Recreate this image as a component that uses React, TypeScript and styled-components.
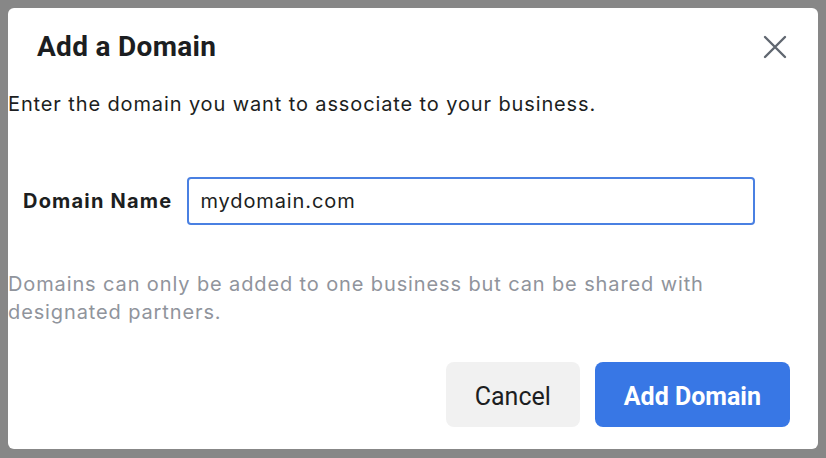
import { useState } from "react";
import styled, { createGlobalStyle } from "styled-components";

const GlobalStyle = createGlobalStyle`
  html {
    background: #878787;
  }
  body {
    margin: 8px;
    font-family: Inter, "Noto Sans", sans-serif;
  }
`;

const Dialog = styled.div`
  width: 810px;
  height: 441px;
  box-sizing: border-box;
  background: #ffffff;
  border-radius: 6px;
  display: flex;
  flex-direction: column;
  padding: 22px 28px 22px 0;
`;

const Header = styled.div`
  display: flex;
  align-items: center;
  justify-content: space-between;
  padding-left: 29px;
  padding-right: 3px;
`;

const Title = styled.h2`
  margin: 0;
  font-family: Roboto, "Liberation Sans", sans-serif;
  font-weight: 700;
  font-size: 28px;
  line-height: 34px;
  letter-spacing: 0.3px;
  color: #1c1e21;
`;

const CloseButton = styled.button`
  width: 24px;
  height: 24px;
  padding: 0;
  border: none;
  background: none;
  cursor: pointer;
  display: flex;
  color: #606770;
`;

const Description = styled.p`
  margin: 28px 0 0;
  font-size: 20px;
  line-height: 24px;
  letter-spacing: 0.88px;
  color: #1c1e21;
`;

const FieldRow = styled.div`
  display: flex;
  align-items: center;
  gap: 15px;
  margin-top: 61px;
  padding-left: 15px;
`;

const Label = styled.label`
  font-weight: 700;
  font-size: 20px;
  letter-spacing: 1.2px;
  color: #1c1e21;
`;

const Input = styled.input`
  width: 568px;
  height: 48px;
  box-sizing: border-box;
  border: 2px solid #4a80e2;
  border-radius: 4px;
  padding: 0 11px;
  font-family: Inter, "Noto Sans", sans-serif;
  font-size: 20px;
  letter-spacing: 0.9px;
  color: #1c1e21;
  outline: none;
  caret-color: #1c1e21;
`;

const Hint = styled.p`
  margin: 45px 0 0;
  max-width: 760px;
  font-size: 20px;
  line-height: 28px;
  letter-spacing: 0.88px;
  color: #90949c;
`;

const Footer = styled.div`
  display: flex;
  justify-content: flex-end;
  gap: 15px;
  margin-top: auto;
`;

const Button = styled.button<{ $primary?: boolean }>`
  height: 65px;
  padding: 3px 29px 0;
  border: none;
  border-radius: 8px;
  font-family: Roboto, "Liberation Sans", sans-serif;
  font-size: 25px;
  font-weight: ${(p) => (p.$primary ? 700 : 400)};
  background: ${(p) => (p.$primary ? "#3877e5" : "#f1f1f1")};
  color: ${(p) => (p.$primary ? "#ffffff" : "#1c1e21")};
  cursor: pointer;
`;

export default function App() {
  const [domain, setDomain] = useState("mydomain.com");

  return (
    <>
      <GlobalStyle />
      <Dialog>
        <Header>
          <Title>Add a Domain</Title>
          <CloseButton aria-label="Close">
            <svg width="24" height="24" viewBox="0 0 24 24" fill="none" stroke="currentColor" strokeWidth="2.4" strokeLinecap="round">
              <path d="M2 2 L22 22 M22 2 L2 22" />
            </svg>
          </CloseButton>
        </Header>
        <Description>Enter the domain you want to associate to your business.</Description>
        <FieldRow>
          <Label htmlFor="domain">Domain Name</Label>
          <Input id="domain" value={domain} onChange={(e) => setDomain(e.target.value)} autoFocus />
        </FieldRow>
        <Hint>Domains can only be added to one business but can be shared with designated partners.</Hint>
        <Footer>
          <Button type="button">Cancel</Button>
          <Button type="button" $primary>Add Domain</Button>
        </Footer>
      </Dialog>
    </>
  );
}
